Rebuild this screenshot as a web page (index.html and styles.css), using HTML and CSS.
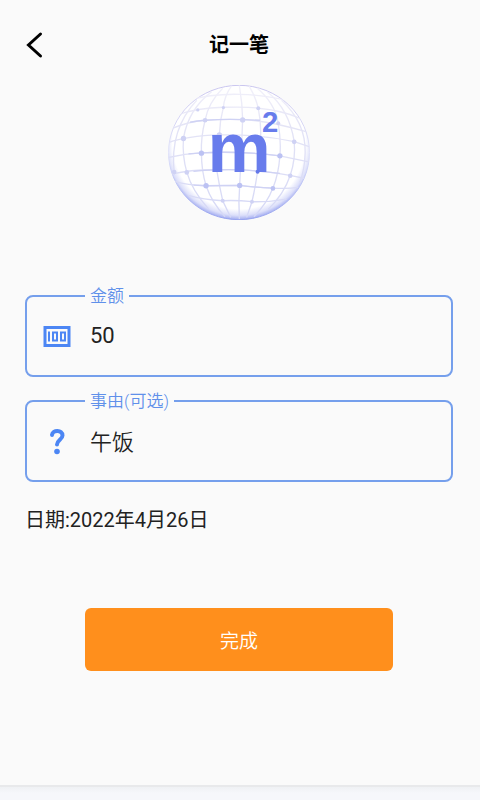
FILE: index.html
```html
<!DOCTYPE html>
<html lang="zh-CN">
<head>
<meta charset="utf-8">
<meta name="viewport" content="width=device-width, initial-scale=1">
<title>记一笔</title>
<link rel="stylesheet" href="styles.css">
</head>
<body>
<div class="page">
  <header class="bar">
    <button class="back" type="button" aria-label="返回">
      <svg width="20" height="28" viewBox="0 0 20 28" fill="none" stroke="#000" stroke-width="3" stroke-linecap="round"><path d="M15.500 3 3.500 14 15.500 25"/></svg>
    </button>
    <h1 class="title">记一笔</h1>
  </header>
  <main class="content">
    <svg class="logo" viewBox="24 22 426 406" role="img" aria-label="m2">
      <defs>
        <radialGradient id="rim" gradientUnits="userSpaceOnUse" cx="237" cy="195" r="238">
          <stop offset="0" stop-color="#fff"/>
          <stop offset=".84" stop-color="#fff"/>
          <stop offset=".92" stop-color="#dcdffa"/>
          <stop offset="1" stop-color="#8794ec"/>
        </radialGradient>
        <linearGradient id="edge" x1="0" y1="0" x2="0" y2="1">
          <stop offset="0" stop-color="#c9c5ef"/>
          <stop offset=".5" stop-color="#e2e4fa"/>
          <stop offset="1" stop-color="#98a4ef"/>
        </linearGradient>
        <linearGradient id="grid" gradientUnits="userSpaceOnUse" x1="0" y1="24" x2="0" y2="420">
          <stop offset="0" stop-color="#f2f1fa"/>
          <stop offset=".3" stop-color="#e4e4f6"/>
          <stop offset="1" stop-color="#d5d8f6"/>
        </linearGradient>
        <clipPath id="ball"><ellipse cx="237" cy="225" rx="213" ry="203"/></clipPath>
      </defs>
      <ellipse cx="237" cy="225" rx="212" ry="202" fill="url(#rim)" stroke="url(#edge)" stroke-width="3"/>
      <g clip-path="url(#ball)">
        <g fill="none" stroke="url(#grid)" stroke-width="4">
          <path d="M82 68Q155 48 238 50T385 70"/>
          <path d="M52 112Q110 91 190 89T295 92Q365 98 420 122"/>
          <path d="M32 154Q85 132 135 128Q190 124 248 126Q330 130 444 164"/>
          <path d="M25 195Q80 175 178 172Q300 170 403 192L448 207"/>
          <path d="M24 240Q75 228 124 226Q240 220 360 235L450 254"/>
          <path d="M34 290Q95 276 170 277Q240 275 293 281Q350 284 440 304"/>
          <path d="M45 312Q80 323 138 325L239 324Q290 330 339 332T415 330"/>
          <path d="M85 354Q130 367 188 370Q230 368 276 373Q330 374 380 365"/>
          <path d="M238 24Q247 75 248 126L244 224 239 324Q235 375 238 425"/>
          <path d="M215 24Q193 55 190 89Q179 130 178 172Q169 225 170 277Q178 326 188 370L212 420"/>
          <path d="M268 26Q287 58 295 92Q304 135 302 180Q301 235 293 281Q286 330 276 373L260 420"/>
          <path d="M188 32Q145 75 135 128Q122 180 124 226Q124 280 138 325Q155 375 195 418"/>
          <path d="M290 30Q345 75 355 137Q364 190 360 235Q356 290 339 332Q322 377 282 418"/>
          <path d="M155 42Q85 95 70 182Q66 235 80 284Q96 340 145 394"/>
          <path d="M322 42Q388 95 403 192Q408 244 391 294Q372 350 325 396"/>
          <path d="M110 68Q28 155 42 285"/>
          <path d="M365 68Q438 135 436 225Q435 275 420 315"/>
        </g>
        <g fill="none" stroke="#cfd2f4" stroke-width="4">
          <path d="M90 134Q112 129 135 128Q190 124 248 126L300 128"/>
          <path d="M85 229L124 226Q240 220 360 235"/>
          <path d="M100 282Q130 277 170 277Q240 275 293 281L360 288"/>
          <path d="M100 323L138 325 239 324Q290 330 339 332"/>
        </g>
        <g fill="#cfd2f4">
          <circle cx="190" cy="90" r="5"/><circle cx="295" cy="92" r="6"/><circle cx="113" cy="97" r="5"/>
          <circle cx="135" cy="128" r="7"/><circle cx="248" cy="127" r="8"/><circle cx="355" cy="137" r="6"/>
          <circle cx="70" cy="183" r="8"/><circle cx="178" cy="172" r="8"/><circle cx="403" cy="193" r="7"/>
          <circle cx="80" cy="285" r="7"/><circle cx="42" cy="284" r="7"/><circle cx="391" cy="295" r="7"/>
          <circle cx="188" cy="370" r="6"/><circle cx="276" cy="373" r="6"/>
        </g>
        <g fill="#bcc2f3">
          <circle cx="124" cy="227" r="8"/><circle cx="360" cy="235" r="8"/>
          <circle cx="138" cy="325" r="8"/><circle cx="239" cy="324" r="8"/><circle cx="339" cy="333" r="7"/>
        </g>
      </g>
      <text class="mark" x="142" y="285" font-size="214" fill="#687cec">m<tspan x="306" y="163" font-size="88">2</tspan></text>
      <circle cx="293" cy="283" r="6" fill="#6478e9"/>
    </svg>

    <form class="form">
      <fieldset class="field">
        <legend class="legend"><label for="amount">金额</label></legend>
        <div class="row">
          <svg class="icon" viewBox="0 0 28 28" fill="none" stroke="#4c86f4">
            <path stroke-width="3" d="M2 5.500H26V23.500H2Z"/>
            <path stroke-width="2" d="M6 9.500V19.500M10 10.500H14V18.500H10ZM18 10.500H22V18.500H18Z"/>
          </svg>
          <input class="input" id="amount" type="text" inputmode="decimal" value="50">
        </div>
      </fieldset>
      <fieldset class="field">
        <legend class="legend"><label for="reason">事由(可选)</label></legend>
        <div class="row">
          <svg class="icon" viewBox="0 0 28 28" fill="none" stroke="#4c86f4">
            <path stroke-width="4" stroke-linecap="round" d="M9 8C9.500 2.500 19.500 2.500 19.500 8.500C19.500 12.500 14 13 14 17.500"/>
            <circle cx="14" cy="24.500" r="2.800" fill="#4c86f4" stroke="none"/>
          </svg>
          <input class="input input-light" id="reason" type="text" value="午饭">
        </div>
      </fieldset>
      <p class="date">日期:2022年4月26日</p>
      <button class="submit" type="button">完成</button>
    </form>
  </main>
  <footer class="strip"></footer>
</div>
</body>
</html>
```
FILE: styles.css
```css
* {
  box-sizing: border-box;
}

body {
  margin: 0;
  background: #fafafa;
  color: #222;
  font-family: Roboto, "Noto Sans CJK SC", sans-serif;
}

.page {
  display: flex;
  flex-direction: column;
  min-height: 100vh;
}

.bar {
  display: grid;
  grid-template-columns: 48px 1fr 48px;
  align-items: center;
  padding: 20px 13px 0 11px;
}

.back {
  display: flex;
  justify-content: center;
  padding: 10px 0;
  border: 0;
  background: none;
}

.title {
  margin: 0;
  color: #000;
  font-size: 20px;
  line-height: 50px;
  font-weight: 700;
  text-align: center;
}

.content {
  display: flex;
  flex: 1;
  flex-direction: column;
  padding: 15px 27px 0 25px;
}

.logo {
  align-self: center;
  width: 142px;
  height: 135px;
}

.mark {
  font-family: "Liberation Sans", sans-serif;
  font-weight: 700;
}

.form {
  display: flex;
  flex-direction: column;
  padding-top: 64px;
}

.field {
  min-width: 0;
  height: 93px;
  margin: 0 0 12px;
  padding: 0 16px 0 58px;
  border: 2px solid #759fec;
  border-radius: 8px;
}

.legend {
  padding: 0 5px;
  color: #5f90ea;
  font-size: 17px;
  font-weight: 350;
  line-height: 24px;
}

.row {
  display: flex;
  align-items: center;
  gap: 19px;
  margin-left: -42px;
  padding-top: 10px;
}

.icon {
  flex: none;
  width: 28px;
  height: 28px;
}

.input {
  flex: 1;
  min-width: 0;
  height: 36px;
  padding: 0 0 2px;
  border: 0;
  outline: 0;
  background: none;
  color: #222;
  font-family: inherit;
  font-size: 22px;
  font-weight: 400;
}

.input-light {
  font-weight: 350;
}

.date {
  margin: 12px 0 2px;
  font-size: 20px;
  line-height: 28px;
}

.submit {
  width: 72%;
  height: 63px;
  margin: 72px auto 0;
  padding: 0;
  border: 0;
  border-radius: 6px;
  background: #ff8f1c;
  color: #fff;
  font-family: inherit;
  font-size: 19px;
  font-weight: 350;
}

.strip {
  height: 15px;
  border-top: 2px solid #e8e9eb;
  background: linear-gradient(#eff1f4, #f6f7fb 6px);
}
```
